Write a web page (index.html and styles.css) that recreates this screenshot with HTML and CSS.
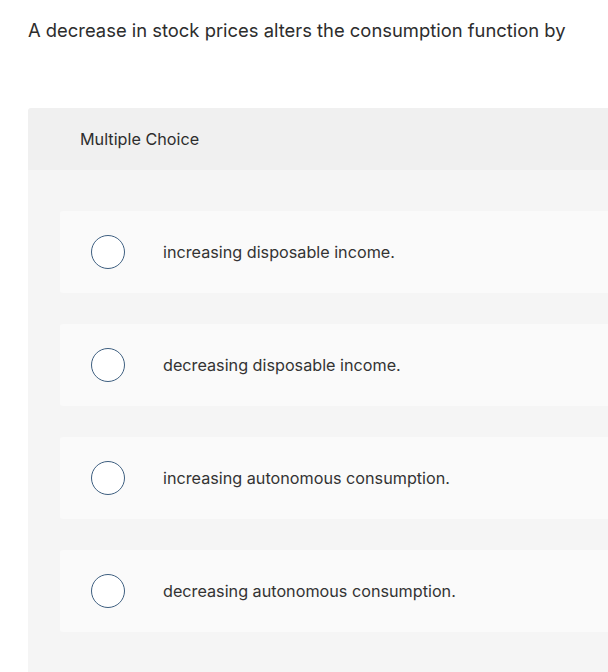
FILE: index.html
```html
<!DOCTYPE html>
<html>
<head>
<meta charset="utf-8">
<link rel="stylesheet" href="styles.css">
</head>
<body>
<div class="page">
  <p class="question">A decrease in stock prices alters the consumption function by</p>
  <div class="panel">
    <div class="panel-head">Multiple Choice</div>
    <div class="panel-body">
      <div class="option"><span class="radio"></span><span class="label">increasing disposable income.</span></div>
      <div class="option"><span class="radio"></span><span class="label">decreasing disposable income.</span></div>
      <div class="option"><span class="radio"></span><span class="label">increasing autonomous consumption.</span></div>
      <div class="option"><span class="radio"></span><span class="label">decreasing autonomous consumption.</span></div>
    </div>
  </div>
</div>
</body>
</html>
```
FILE: styles.css
```css
html, body {
  margin: 0;
  padding: 0;
  background: #ffffff;
  overflow: hidden;
}
.page {
  width: 608px;
  height: 672px;
  overflow: hidden;
  font-family: Inter, "Liberation Sans", sans-serif;
  color: #333333;
}
.question {
  margin: 0;
  padding: 18px 0 0 28px;
  height: 25px;
  font-size: 18.4px;
  line-height: 25px;
  color: #2d2d2d;
  white-space: nowrap;
}
.panel {
  margin: 65px 0 0 28px;
  border-radius: 3px 0 0 0;
  overflow: hidden;
}
.panel-head {
  height: 62px;
  background: #f0f0f0;
  display: flex;
  align-items: center;
  padding-left: 52px;
  font-size: 16.2px;
  color: #2d2d2d;
}
.panel-body {
  background: #f5f5f5;
  padding: 41px 0 60px 32px;
  display: flex;
  flex-direction: column;
  gap: 31px;
}
.option {
  height: 82px;
  background: #fafafa;
  border-radius: 3px 0 0 3px;
  display: flex;
  align-items: center;
  padding-left: 31px;
}
.radio {
  width: 32px;
  height: 32px;
  border: 1.5px solid #3e5f80;
  border-radius: 50%;
  background: #ffffff;
  flex: none;
}
.label {
  margin-left: 38px;
  font-size: 16.2px;
  color: #333333;
}
```
